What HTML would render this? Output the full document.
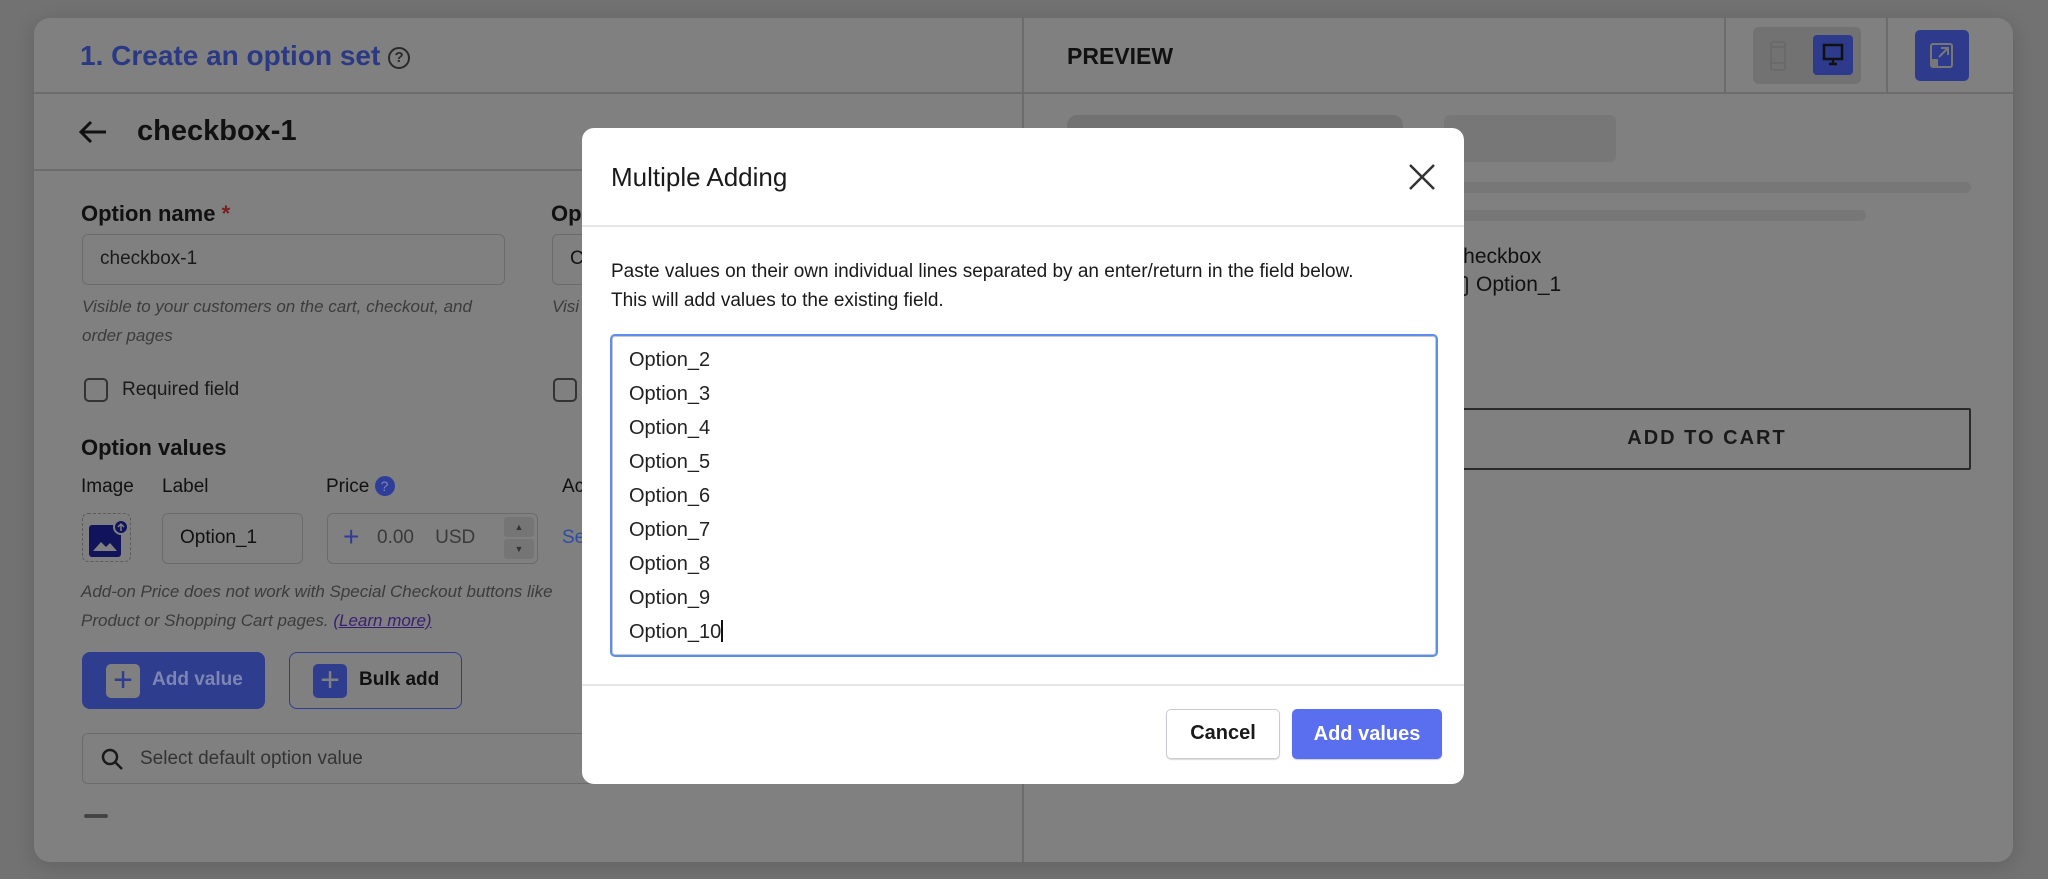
<!DOCTYPE html>
<html><head><meta charset="utf-8"><style>
*{box-sizing:border-box;margin:0;padding:0}
body{width:2048px;height:879px;background:#727272;font-family:"Liberation Sans",Arial,sans-serif;position:relative;overflow:hidden;color:#111}
.a{position:absolute}
.card{left:34px;top:18px;width:1979px;height:844px;background:#808080;border-radius:16px;box-shadow:0 4px 20px rgba(0,0,0,.15)}
.inp{position:absolute;border:1.5px solid #6b6b6b;border-radius:6px;background:#808080}
.it{font-style:italic;color:#3c3c3c;font-size:17px}
.modal{left:582px;top:128px;width:882px;height:656px;background:#fff;border-radius:12px}
.opt{font-size:20px;color:#222;height:34px;line-height:34px}
</style></head><body>
<div class="a card"></div>
<div class="a" style="left:34px;top:92px;width:1979px;height:2px;background:#6c6c6c"></div>
<div class="a" style="left:34px;top:169px;width:989px;height:2px;background:#6c6c6c"></div>
<div class="a" style="left:1022px;top:18px;width:2px;height:844px;background:#6c6c6c"></div>
<div class="a" style="left:1724px;top:18px;width:2px;height:75px;background:#6c6c6c"></div>
<div class="a" style="left:1886px;top:18px;width:2px;height:75px;background:#6c6c6c"></div>

<div class="a" style="left:80px;top:40px;font-size:28px;font-weight:bold;color:#2b3884">1. Create an option set <span style="display:inline-block;width:22px;height:22px;border:2.5px solid #2a2a2a;border-radius:50%;font-size:15px;text-align:center;line-height:17px;color:#2a2a2a;vertical-align:3px">?</span></div>
<svg class="a" style="left:78px;top:119px" width="30" height="26" viewBox="0 0 30 26"><path d="M28 13H3M13 3L3 13l10 10" stroke="#111" stroke-width="3" fill="none"/></svg>
<div class="a" style="left:137px;top:115px;font-size:29px;font-weight:bold;color:#111">checkbox-1</div>

<div class="a" style="left:81px;top:201px;font-size:22px;font-weight:bold">Option name <span style="color:#7a1e1e">*</span></div>
<div class="a" style="left:551px;top:201px;font-size:22px;font-weight:bold">Op</div>
<div class="inp" style="left:82px;top:234px;width:423px;height:51px"></div>
<div class="a" style="left:100px;top:248px;font-size:19px;color:#1a1a1a">checkbox-1</div>
<div class="inp" style="left:552px;top:234px;width:60px;height:51px"></div>
<div class="a" style="left:570px;top:248px;font-size:19px">C</div>
<div class="a it" style="left:82px;top:292px;line-height:29px">Visible to your customers on the cart, checkout, and<br>order pages</div>
<div class="a it" style="left:552px;top:292px;line-height:29px">Visi</div>
<div class="a" style="left:84px;top:378px;width:24px;height:24px;border:2px solid #333;border-radius:5px"></div>
<div class="a" style="left:122px;top:379px;font-size:19px;color:#1a1a1a">Required field</div>
<div class="a" style="left:553px;top:378px;width:24px;height:24px;border:2px solid #333;border-radius:5px"></div>

<div class="a" style="left:81px;top:435px;font-size:22px;font-weight:bold">Option values</div>
<div class="a" style="left:81px;top:476px;font-size:19px">Image</div>
<div class="a" style="left:162px;top:476px;font-size:19px">Label</div>
<div class="a" style="left:326px;top:476px;font-size:19px">Price <span style="display:inline-block;width:20px;height:20px;background:#2e3d99;border-radius:50%;color:#7d86b8;font-size:14px;text-align:center;line-height:20px;vertical-align:1px">?</span></div>
<div class="a" style="left:562px;top:476px;font-size:19px">Ac</div>
<div class="a" style="left:82px;top:513px;width:49px;height:49px;border:1.5px dashed #5c5c5c;border-radius:6px"></div>
<svg class="a" style="left:88px;top:518px" width="42" height="40" viewBox="0 0 42 40"><rect x="1" y="7" width="32" height="32" rx="3" fill="#11145a"/><path d="M5 33l8-9 5 5 4-4 7 8z" fill="#808080"/><circle cx="33" cy="9" r="7" fill="#11145a" stroke="#808080" stroke-width="2"/><path d="M33 13V6M30 9l3-3 3 3" stroke="#808080" stroke-width="1.5" fill="none"/></svg>
<div class="inp" style="left:162px;top:513px;width:141px;height:51px"></div>
<div class="a" style="left:180px;top:527px;font-size:19px">Option_1</div>
<div class="inp" style="left:327px;top:513px;width:211px;height:51px"></div>
<div class="a" style="left:343px;top:521px;font-size:28px;color:#2e3d99">+</div>
<div class="a" style="left:377px;top:527px;font-size:19px;color:#3a3a3a">0.00 &nbsp;&nbsp; USD</div>
<div class="a" style="left:504px;top:517px;width:30px;height:20px;background:#757575;border-radius:3px;font-size:9px;text-align:center;line-height:20px;color:#333">▲</div>
<div class="a" style="left:504px;top:539px;width:30px;height:20px;background:#757575;border-radius:3px;font-size:9px;text-align:center;line-height:20px;color:#333">▼</div>
<div class="a" style="left:562px;top:527px;font-size:19px;color:#2c4ea0">Se</div>
<div class="a it" style="left:81px;top:577px;line-height:29px">Add-on Price does not work with Special Checkout buttons like<br>Product or Shopping Cart pages. <span style="color:#3a1f70;text-decoration:underline">(Learn more)</span></div>

<div class="a" style="left:82px;top:652px;width:183px;height:57px;background:#2f3d8f;border-radius:8px"></div>
<div class="a" style="left:106px;top:664px;width:34px;height:34px;background:#808080;border-radius:5px;color:#2f3d8f;font-size:34px;line-height:32px;text-align:center">+</div>
<div class="a" style="left:152px;top:669px;font-size:19px;font-weight:bold;color:#7d85b5">Add value</div>
<div class="a" style="left:289px;top:652px;width:173px;height:57px;border:1.5px solid #2f3d8f;border-radius:8px"></div>
<div class="a" style="left:313px;top:664px;width:34px;height:34px;background:#2f3d8f;border-radius:5px;color:#808080;font-size:34px;line-height:32px;text-align:center">+</div>
<div class="a" style="left:359px;top:669px;font-size:19px;font-weight:bold;color:#111">Bulk add</div>
<div class="inp" style="left:82px;top:733px;width:560px;height:51px"></div>
<svg class="a" style="left:100px;top:747px" width="24" height="24" viewBox="0 0 24 24"><circle cx="10" cy="10" r="7" stroke="#1a1a1a" stroke-width="2.5" fill="none"/><path d="M15 15l7 7" stroke="#1a1a1a" stroke-width="2.5"/></svg>
<div class="a" style="left:140px;top:748px;font-size:19px;color:#333">Select default option value</div>
<div class="a" style="left:84px;top:814px;width:24px;height:4px;background:#444;border-radius:3px"></div>

<div class="a" style="left:1067px;top:43px;font-size:23px;font-weight:bold;color:#111">PREVIEW</div>
<div class="a" style="left:1753px;top:27px;width:108px;height:57px;background:#727272;border-radius:6px"></div>
<svg class="a" style="left:1770px;top:41px" width="16" height="30" viewBox="0 0 16 30"><rect x="1" y="1" width="14" height="28" rx="2" fill="none" stroke="#6a6a6a" stroke-width="2"/><path d="M1 6h14M1 22h14" stroke="#6a6a6a" stroke-width="2"/></svg>
<div class="a" style="left:1813px;top:35px;width:40px;height:40px;background:#2e3a8c;border-radius:4px"></div>
<svg class="a" style="left:1820px;top:43px" width="26" height="24" viewBox="0 0 26 24"><rect x="4" y="2" width="18" height="14" fill="none" stroke="#111" stroke-width="2.5"/><path d="M13 16v5M9 21h8" stroke="#111" stroke-width="2.5"/></svg>
<div class="a" style="left:1915px;top:30px;width:54px;height:51px;background:#2e3a8c;border-radius:5px"></div>
<svg class="a" style="left:1928px;top:42px" width="28" height="28" viewBox="0 0 28 28"><rect x="3" y="2" width="21" height="23" rx="2" fill="none" stroke="#777" stroke-width="2"/><path d="M11 15l9-9M13 6h7v7" stroke="#777" stroke-width="2" fill="none"/><rect x="3" y="17" width="7" height="8" fill="#777"/></svg>
<div class="a" style="left:1067px;top:115px;width:336px;height:47px;background:#727272;border-radius:10px"></div>
<div class="a" style="left:1444px;top:115px;width:172px;height:47px;background:#777;border-radius:6px"></div>
<div class="a" style="left:1067px;top:182px;width:904px;height:11px;background:#777;border-radius:6px"></div>
<div class="a" style="left:1067px;top:210px;width:799px;height:11px;background:#777;border-radius:6px"></div>
<div class="a" style="left:1448px;top:245px;font-size:21px;color:#111">Checkbox</div>
<div class="a" style="left:1452px;top:276px;width:16px;height:20px;border:2px solid #222;border-radius:3px"></div>
<div class="a" style="left:1476px;top:273px;font-size:21px;color:#111">Option_1</div>
<div class="a" style="left:1443px;top:408px;width:528px;height:62px;border:2px solid #2a2a2a;border-radius:2px"></div>
<div class="a" style="left:1443px;top:427px;width:528px;text-align:center;font-size:20px;font-weight:bold;letter-spacing:2px;color:#1a1a1a">ADD TO CART</div>

<div class="a modal"></div>
<div class="a" style="left:611px;top:162px;font-size:26px;color:#1a1a1a">Multiple Adding</div>
<svg class="a" style="left:1408px;top:163px" width="28" height="28" viewBox="0 0 28 28"><path d="M2 2l24 24M26 2L2 26" stroke="#333" stroke-width="2.5"/></svg>
<div class="a" style="left:582px;top:225px;width:882px;height:2px;background:#e6e6e6"></div>
<div class="a" style="left:611px;top:257px;font-size:19px;line-height:29px;color:#1a1a1a">Paste values on their own individual lines separated by an enter/return in the field below.<br>This will add values to the existing field.</div>
<div class="a" style="left:610px;top:334px;width:828px;height:323px;border:2px solid #5b8ef0;border-radius:5px;box-shadow:inset 0 0 0 1px #c8c8c8"></div>
<div class="a" style="left:629px;top:343px">
<div class="opt">Option_2</div><div class="opt">Option_3</div><div class="opt">Option_4</div><div class="opt">Option_5</div><div class="opt">Option_6</div><div class="opt">Option_7</div><div class="opt">Option_8</div><div class="opt">Option_9</div><div class="opt">Option_10<span style="display:inline-block;width:1.5px;height:22px;background:#111;vertical-align:-4px"></span></div>
</div>
<div class="a" style="left:582px;top:684px;width:882px;height:2px;background:#e6e6e6"></div>
<div class="a" style="left:1166px;top:709px;width:114px;height:50px;border:1.5px solid #c9ccd2;border-radius:5px;box-shadow:0 1px 1px rgba(0,0,0,.15);text-align:center;line-height:47px;font-size:20px;font-weight:bold;color:#1a1a1a">Cancel</div>
<div class="a" style="left:1292px;top:709px;width:150px;height:50px;background:#5a6ff0;border-radius:5px;box-shadow:0 1px 1px rgba(0,0,0,.2);text-align:center;line-height:50px;font-size:20px;font-weight:bold;color:#fff">Add values</div>
</body></html>
